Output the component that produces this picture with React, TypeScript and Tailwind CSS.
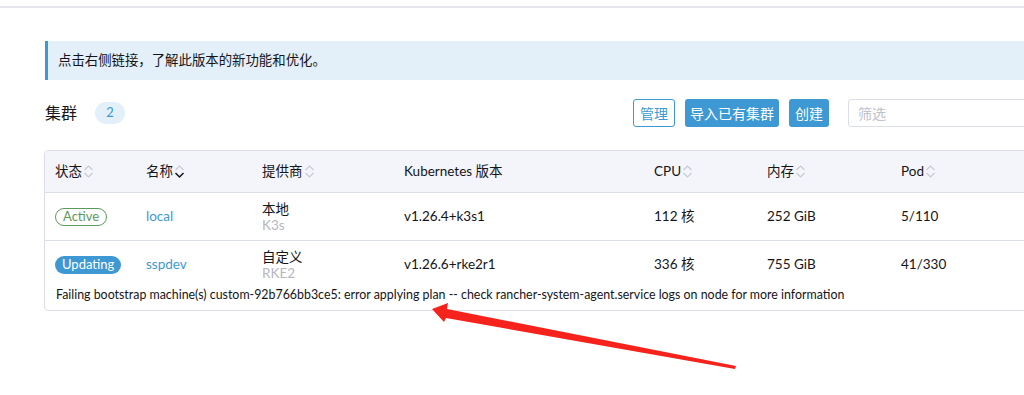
import React from "react";

type Row = {
  state: "Active" | "Updating";
  name: string;
  provider: string;
  providerSub: string;
  version: string;
  cpu: string;
  mem: string;
  pods: string;
  message?: string;
};

const rows: Row[] = [
  {
    state: "Active",
    name: "local",
    provider: "本地",
    providerSub: "K3s",
    version: "v1.26.4+k3s1",
    cpu: "112 核",
    mem: "252 GiB",
    pods: "5/110",
  },
  {
    state: "Updating",
    name: "sspdev",
    provider: "自定义",
    providerSub: "RKE2",
    version: "v1.26.6+rke2r1",
    cpu: "336 核",
    mem: "755 GiB",
    pods: "41/330",
    message:
      "Failing bootstrap machine(s) custom-92b766bb3ce5: error applying plan -- check rancher-system-agent.service logs on node for more information",
  },
];

function SortIcon({ active }: { active?: boolean }) {
  return (
    <svg width="11" height="15" viewBox="0 0 11 15" className="ml-[1px] inline-block">
      <path d="M1.5 6 L5.5 2 L9.5 6" fill="none" stroke="#c8c9d2" strokeWidth="1.2" />
      <path
        d="M1.5 9 L5.5 13 L9.5 9"
        fill="none"
        stroke={active ? "#141419" : "#c8c9d2"}
        strokeWidth={active ? 1.5 : 1.2}
      />
    </svg>
  );
}

const cols = "grid grid-cols-[91px_116px_142px_250px_113px_134px_200px]";

export default function App() {
  return (
    <div
      className="relative h-[395px] w-[1024px] overflow-hidden bg-white text-[13.5px] text-[#141419]"
      style={{ fontFamily: 'Lato, "Noto Sans CJK SC", sans-serif' }}
    >
      <div className="h-[8px] border-b-2 border-[#e4e5ea]" />

      <div className="w-[1100px] pl-[44px] pt-[33px]">
        <div className="ml-[1px] flex h-[39px] items-center border-l-[3px] border-[#3d98d3] bg-[#e3f0f9] pl-[10px] text-[13.4px]">
          点击右侧链接，了解此版本的新功能和优化。
        </div>

        <div className="mt-[19px] flex h-[28px] items-center">
          <div className="ml-[1px] text-[16px]">集群</div>
          <div className="ml-[18px] flex h-[22px] w-[30px] items-center justify-center rounded-full bg-[#e3f0f9] text-[13px] text-[#3d98d3]">
            2
          </div>
          <div className="ml-[508px] flex h-[28px] items-center rounded-[3px] border border-[#3d98d3] px-[6px] text-[14px] text-[#3d98d3]">
            管理
          </div>
          <div className="ml-[10px] flex h-[28px] items-center rounded-[3px] bg-[#3d98d3] px-[5px] text-[14px] text-white">
            导入已有集群
          </div>
          <div className="ml-[10px] flex h-[28px] items-center rounded-[3px] bg-[#3d98d3] px-[6px] text-[14px] text-white">
            创建
          </div>
          <div className="ml-[19px] flex h-[28px] w-[220px] items-center rounded-[3px] border border-[#dcdee7] pl-[9px] text-[14px] text-[#c0c1cb]">
            筛选
          </div>
        </div>

        <div className="mt-[23px] overflow-hidden rounded-[4px] border border-[#dcdee7]">
          <div className={`${cols} h-[42px] items-center border-b border-[#dcdee7] bg-[#f4f5fa] pl-[10px]`}>
            <div className="flex items-center">状态<SortIcon /></div>
            <div className="flex items-center">名称<SortIcon active /></div>
            <div className="flex items-center">提供商<SortIcon /></div>
            <div>Kubernetes 版本</div>
            <div className="flex items-center">CPU<SortIcon /></div>
            <div className="flex items-center">内存<SortIcon /></div>
            <div className="flex items-center">Pod<SortIcon /></div>
          </div>

          {rows.map((r, i) => (
            <div key={r.name} className={i > 0 ? "border-t border-[#dcdee7]" : ""}>
              <div className={`${cols} h-[47px] items-center pl-[10px]`}>
                <div>
                  {r.state === "Active" ? (
                    <span className="inline-flex h-[18px] items-center rounded-full border border-[#5d995d] px-[7px] text-[13px] text-[#5d995d]">
                      Active
                    </span>
                  ) : (
                    <span className="inline-flex h-[18px] items-center rounded-full bg-[#3d98d3] px-[7px] text-[13px] text-white">
                      Updating
                    </span>
                  )}
                </div>
                <div className="text-[#3d98d3]">{r.name}</div>
                <div className="flex flex-col leading-[16px]">
                  <span>{r.provider}</span>
                  <span className="text-[#b6b6c2]">{r.providerSub}</span>
                </div>
                <div>{r.version}</div>
                <div>{r.cpu}</div>
                <div>{r.mem}</div>
                <div>{r.pods}</div>
              </div>
              {r.message && (
                <div className="-mt-[1px] pb-[7px] pl-[11px] text-[12.4px] leading-[16px]">{r.message}</div>
              )}
            </div>
          ))}
        </div>
      </div>

      <svg
        className="pointer-events-none absolute left-0 top-0"
        width="1024"
        height="395"
        viewBox="0 0 1024 395"
      >
        <polygon
          points="432,309 448,303 447,309 736,366 735,369 446,318 444,322"
          fill="#f5231b"
        />
      </svg>
    </div>
  );
}
